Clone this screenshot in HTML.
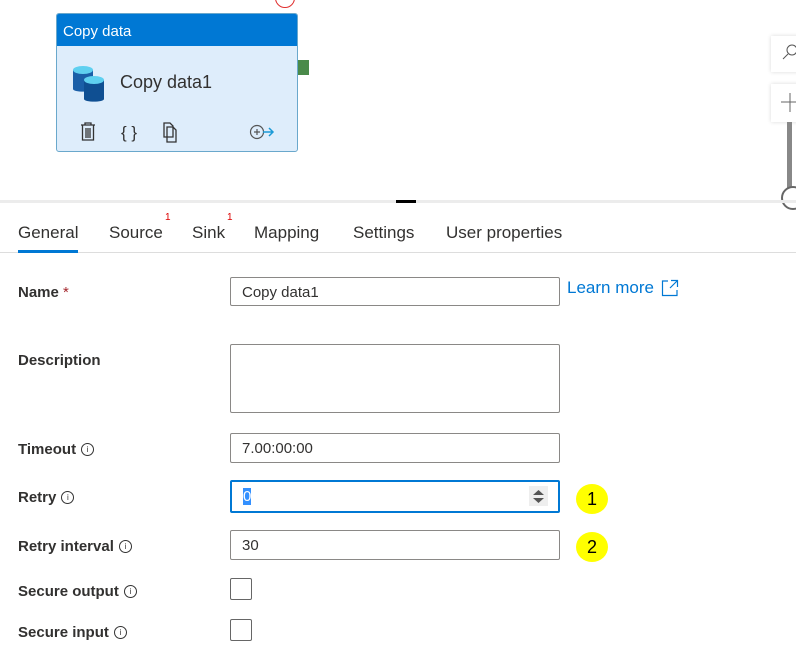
<!DOCTYPE html>
<html><head><style>
body{margin:0;width:796px;height:662px;background:#fff;position:relative;overflow:hidden;font-family:"Liberation Sans",sans-serif;color:#323130}
.a{position:absolute}
.lbl{position:absolute;left:18px;font-size:15px;font-weight:bold;color:#323130}
.inp{position:absolute;left:230px;width:330px;border:1px solid #8a8886;border-radius:2px;font-size:15px;color:#323130;box-sizing:border-box;padding-left:11px}
.info{display:inline-block;width:11px;height:11px;border:1px solid #333;border-radius:50%;font-size:8px;line-height:11px;text-align:center;font-weight:normal;vertical-align:2px;margin-left:5px}
.tab{position:absolute;top:223px;font-size:17px;color:#323130}
.sup{position:absolute;font-size:10px;color:#d00}
.cb{position:absolute;left:230px;width:22px;height:22px;border:1px solid #666;border-radius:2px;box-sizing:border-box}
.yc{position:absolute;left:576px;width:32px;height:30px;border-radius:50%;background:#ffff00;font-size:18px;text-align:center;line-height:30px;color:#000}
</style></head><body>
<div class="a" style="left:275px;top:-12px;width:18px;height:18px;border:1px solid #e03030;border-radius:50%"></div>
<div class="a" style="left:297px;top:60px;width:12px;height:15px;background:#4a8a4a"></div>
<div class="a" style="left:56px;top:13px;width:240px;height:137px;border:1px solid #6aa8cc;border-radius:3px;background:#deedfb;overflow:hidden">
 <div style="height:32px;background:#0078d4;color:#fff;font-size:15px;line-height:36px;padding-left:6px">Copy data</div>
 <svg class="a" style="left:15px;top:50px" width="34" height="40" viewBox="0 0 34 40">
  <path d="M1 6v19c0 3.5 20 3.5 20 0V6z" fill="#1a5fa8"/><ellipse cx="11" cy="6" rx="10" ry="4" fill="#5fd0f0"/>
  <path d="M12 16v19c0 3.5 20 3.5 20 0V16z" fill="#0f4f92"/><ellipse cx="22" cy="16" rx="10" ry="4" fill="#5fd0f0"/>
 </svg>
 <div class="a" style="left:63px;top:58px;font-size:18px;color:#323130">Copy data1</div>
 <svg class="a" style="left:22px;top:107px" width="180" height="24" viewBox="0 0 180 24" fill="none" stroke="#333" stroke-width="1.3">
  <path d="M2 4h14M6 4V2h6v2M3.5 4v15h11V4M7 7v10M9 7v10M11 7v10"/>
  <text x="42" y="17" font-size="17" fill="#333" stroke="none" font-family="Liberation Sans">{ }</text>
  <path d="M85 2h6l3 3v11h-9zM88 6h6l3 3v12h-9z" fill="#deedfb"/>
 </svg>
 <svg class="a" style="left:192px;top:108px" width="26" height="20" viewBox="0 0 26 20" fill="none">
  <circle cx="8" cy="10" r="6.5" stroke="#555" stroke-width="1.2"/><path d="M5 10h6M8 7v6" stroke="#555" stroke-width="1.2"/>
  <path d="M14 10h10M20 6l4 4-4 4" stroke="#1a9ad6" stroke-width="1.5"/>
 </svg>
</div>
<div class="a" style="left:771px;top:36px;width:30px;height:36px;background:#fff;box-shadow:0 0 4px rgba(0,0,0,.15)"><svg width="30" height="36"><circle cx="21" cy="14" r="5" fill="none" stroke="#555"/><path d="M17 18l-5 5" stroke="#555"/></svg></div>
<div class="a" style="left:771px;top:84px;width:30px;height:38px;background:#fff;box-shadow:0 0 4px rgba(0,0,0,.15)"><svg width="30" height="38"><path d="M10 18h20M19 9v19" stroke="#666"/></svg></div>
<div class="a" style="left:787px;top:122px;width:5px;height:68px;background:#888"></div>
<div class="a" style="left:781px;top:186px;width:20px;height:20px;border:2px solid #666;border-radius:50%;background:#fff"></div>
<div class="a" style="left:0;top:200px;width:796px;height:3px;background:#ececec"></div>
<div class="a" style="left:396px;top:200px;width:20px;height:3px;background:#000"></div>
<div class="tab" style="left:18px">General</div>
<div class="tab" style="left:109px">Source</div><div class="sup" style="left:165px;top:212px">1</div>
<div class="tab" style="left:192px">Sink</div><div class="sup" style="left:227px;top:212px">1</div>
<div class="tab" style="left:254px">Mapping</div>
<div class="tab" style="left:353px">Settings</div>
<div class="tab" style="left:446px">User properties</div>
<div class="a" style="left:0;top:252px;width:796px;height:1px;background:#ddd"></div>
<div class="a" style="left:18px;top:250px;width:60px;height:3px;background:#0078d4"></div>
<div class="lbl" style="top:284px">Name <span style="color:#a4262c;font-weight:normal">*</span></div>
<div class="inp" style="top:277px;height:29px;line-height:29px">Copy data1</div>
<div class="a" style="left:567px;top:278px;font-size:17px;color:#0078d4">Learn more</div>
<svg class="a" style="left:661px;top:279px" width="18" height="18" fill="none" stroke="#0078d4" stroke-width="1.2"><path d="M7 2H1.5v14.5H16V11M10 1.5h6.5V8M16.5 1.5L9 9"/></svg>
<div class="lbl" style="top:352px">Description</div>
<div class="inp" style="top:344px;height:69px"></div>
<div class="lbl" style="top:441px">Timeout<span class="info">i</span></div>
<div class="inp" style="top:433px;height:30px;line-height:30px">7.00:00:00</div>
<div class="lbl" style="top:489px">Retry<span class="info">i</span></div>
<div class="inp" style="top:480px;height:33px;line-height:29px;border:2px solid #0078d4;padding-left:11px"><span style="background:#3390ff;color:#fff">0</span>
 <div class="a" style="right:10px;top:4px;width:19px;height:20px;background:#eee"><svg width="19" height="20"><path d="M4 9l5.5-5 5.5 5zM4 12l5.5 5 5.5-5z" fill="#555"/></svg></div></div>
<div class="yc" style="top:484px">1</div>
<div class="lbl" style="top:538px">Retry interval<span class="info">i</span></div>
<div class="inp" style="top:530px;height:30px;line-height:30px">30</div>
<div class="yc" style="top:532px">2</div>
<div class="lbl" style="top:583px">Secure output<span class="info">i</span></div>
<div class="cb" style="top:578px"></div>
<div class="lbl" style="top:624px">Secure input<span class="info">i</span></div>
<div class="cb" style="top:619px"></div>
</body></html>
